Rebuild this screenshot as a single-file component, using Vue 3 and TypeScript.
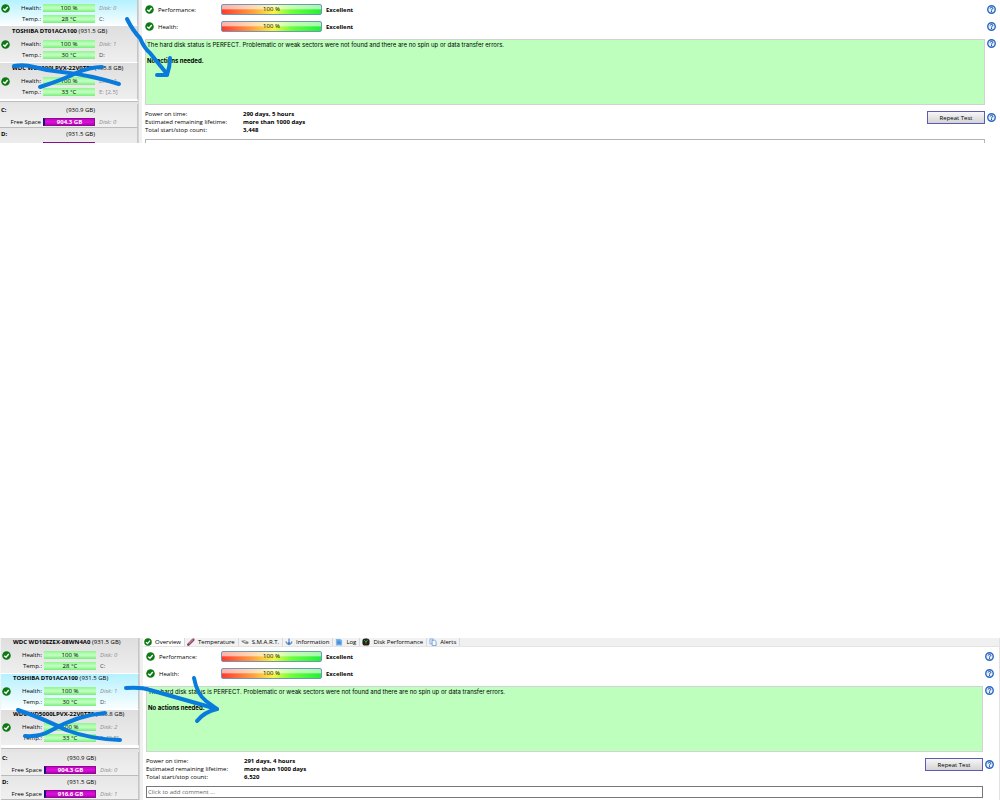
<script setup lang="ts">
interface Disk {
  model: string
  size: string
  temp: string
  disk: string
  letter: string
  selected?: boolean
}
interface Volume {
  name: string
  size: string
  free: string
  disk: string
}
interface Report {
  id: string
  tabs: boolean
  disks: Disk[]
  powerOn: string
  startStop: string
  strokes: string[]
}

const volumes: Volume[] = [
  { name: 'C:', size: '(930.9 GB)', free: '904.3 GB', disk: 'Disk: 0' },
  { name: 'D:', size: '(931.5 GB)', free: '916.6 GB', disk: 'Disk: 1' },
]

const tabs = [
  { label: 'Overview', icon: 'ok' },
  { label: 'Temperature', icon: 'temp' },
  { label: 'S.M.A.R.T.', icon: 'smart' },
  { label: 'Information', icon: 'info' },
  { label: 'Log', icon: 'log' },
  { label: 'Disk Performance', icon: 'perf' },
  { label: 'Alerts', icon: 'alert' },
]

const reports: Report[] = [
  {
    id: 'first',
    tabs: false,
    disks: [
      { model: '', size: '', temp: '28 °C', disk: 'Disk: 0', letter: 'C:', selected: true },
      { model: 'TOSHIBA DT01ACA100', size: '(931.5 GB)', temp: '30 °C', disk: 'Disk: 1', letter: 'D:' },
      { model: 'WDC WD5000LPVX-22V0TT0', size: '(465.8 GB)', temp: '33 °C', disk: 'Disk: 2', letter: 'E: [2.5]' },
    ],
    powerOn: '290 days, 5 hours',
    startStop: '3,448',
    strokes: [
      'M127 19Q133 31 140 38Q144 48 150 53L167 74',
      'M170 58Q170 66 167 75L157 75',
      'M14 66Q24 64 34 67Q48 71 62 72Q90 75 119 84',
      'M40 87Q65 79 76 73Q90 67 102 67',
    ],
  },
  {
    id: 'second',
    tabs: true,
    disks: [
      { model: 'WDC WD10EZEX-08WN4A0', size: '(931.5 GB)', temp: '28 °C', disk: 'Disk: 0', letter: 'C:' },
      { model: 'TOSHIBA DT01ACA100', size: '(931.5 GB)', temp: '30 °C', disk: 'Disk: 1', letter: 'D:', selected: true },
      { model: 'WDC WD5000LPVX-22V0TT0', size: '(465.8 GB)', temp: '33 °C', disk: 'Disk: 2', letter: 'E: [2.5]' },
    ],
    powerOn: '291 days, 4 hours',
    startStop: '6,520',
    strokes: [
      'M126 50Q142 49 150 52L217 71',
      'M194 40Q197 56 206 63L217 71Q204 74 197 83',
      'M18 72Q42 80 66 92Q90 101 120 102',
      'M25 98Q40 99 50 93Q78 77 105 75',
    ],
  },
]
</script>

<template>
  <div class="page">
    <section v-for="r in reports" :key="r.id" class="report" :class="r.id">
      <aside class="side">
        <div class="disks">
          <div v-for="d in r.disks" :key="d.disk" class="disk" :class="{ selected: d.selected, partial: !d.model }">
            <div v-if="d.model" class="title"><b>{{ d.model }}</b> {{ d.size }}</div>
            <div class="stats">
              <svg class="ok" viewBox="0 0 18 18"><circle cx="9" cy="9" r="8.5" fill="#0b7a12" /><path d="M4.500 9.500L8 12.500L13.500 6" fill="none" stroke="#fff" stroke-width="2.800" /></svg>
              <span class="name">Health:</span><span class="bar">100 %</span><i>{{ d.disk }}</i>
              <span class="name">Temp.:</span><span class="bar">{{ d.temp }}</span><span class="letter" :class="{ muted: d.letter.length > 2 }">{{ d.letter }}</span>
            </div>
          </div>
        </div>
        <div class="volumes">
          <div v-for="v in volumes" :key="v.name" class="volume">
            <b>{{ v.name }}</b><span class="capacity">{{ v.size }}</span><span></span>
            <span class="name">Free Space</span><span class="free">{{ v.free }}</span><i>{{ v.disk }}</i>
          </div>
        </div>
      </aside>

      <main class="main">
        <nav v-if="r.tabs" class="tabs">
          <button v-for="t in tabs" :key="t.label" type="button" class="tab" :class="{ active: t.icon === 'ok' }">
            <svg viewBox="0 0 18 18">
              <template v-if="t.icon === 'ok'"><circle cx="9" cy="9" r="8.500" fill="#0b7a12" /><path d="M4.500 9.500L8 12.500L13.500 6" fill="none" stroke="#fff" stroke-width="2.800" /></template>
              <template v-else-if="t.icon === 'temp'"><path d="M3 15L14 4" stroke="#8d4360" stroke-width="6" stroke-linecap="round" /><path d="M4 13L14 3" stroke="#e7a9bd" stroke-width="2" /></template>
              <template v-else-if="t.icon === 'smart'"><path d="M1 6L8 5L17 9L16 13L10 13L2 9Z" fill="#777" /><path d="M3 6L9 6L14 9L9 10Z" fill="#ddd" /></template>
              <template v-else-if="t.icon === 'info'"><path d="M9 1V12M2 8Q4 14 9 15Q14 14 16 8" fill="none" stroke="#5d8fd0" stroke-width="3" /><path d="M6 10H12L9 15Z" fill="#2f62ac" /></template>
              <template v-else-if="t.icon === 'log'"><path d="M2 2H12L16 5V17H2Z" fill="#78b6ee" /><path d="M5 7H12M5 10H13M5 13H13" stroke="#2a6dbd" stroke-width="1.500" /></template>
              <template v-else-if="t.icon === 'perf'"><rect x="1" y="1" width="16" height="16" rx="6" fill="#17251a" /><path d="M5 5L9 9L13 4" fill="none" stroke="#3bbf46" stroke-width="2" /><circle cx="9" cy="11" r="2" fill="#b03030" /></template>
              <template v-else><path d="M2 2H9V13H2Z" fill="#dcecff" stroke="#6a9ad8" stroke-width="1.500" /><path d="M7 5H13L16 8V17H7Z" fill="#f5faff" stroke="#4a7fc8" stroke-width="1.500" /></template>
            </svg>{{ t.label }}
          </button>
        </nav>
        <div class="body">
          <div v-for="m in ['Performance:', 'Health:']" :key="m" class="metric">
            <svg class="ok" viewBox="0 0 18 18"><circle cx="9" cy="9" r="8.500" fill="#0b7a12" /><path d="M4.500 9.500L8 12.500L13.500 6" fill="none" stroke="#fff" stroke-width="2.800" /></svg>
            <span class="metric-name">{{ m }}</span>
            <span class="gauge">100 %</span>
            <b>Excellent</b>
            <button type="button" class="help" aria-label="Help"><svg viewBox="0 0 18 18"><circle cx="9" cy="9" r="7.500" fill="#e2f1ff" stroke="#2a68c4" stroke-width="2.800" /><path d="M6.300 7Q6.500 4.800 9 4.800Q11.700 4.900 11.600 7Q11.400 8.500 9 9.600V11M9 12.200V14" fill="none" stroke="#233f9c" stroke-width="2" /></svg></button>
          </div>
          <div class="status-row">
            <div class="status">
              <p>The hard disk status is PERFECT. Problematic or weak sectors were not found and there are no spin up or data transfer errors.</p>
              <p><b>No actions needed.</b></p>
            </div>
            <button type="button" class="help" aria-label="Help"><svg viewBox="0 0 18 18"><circle cx="9" cy="9" r="7.500" fill="#e2f1ff" stroke="#2a68c4" stroke-width="2.800" /><path d="M6.300 7Q6.500 4.800 9 4.800Q11.700 4.900 11.600 7Q11.400 8.500 9 9.600V11M9 12.200V14" fill="none" stroke="#233f9c" stroke-width="2" /></svg></button>
          </div>
          <div class="summary">
            <dl>
              <dt>Power on time:</dt><dd>{{ r.powerOn }}</dd>
              <dt>Estimated remaining lifetime:</dt><dd>more than 1000 days</dd>
              <dt>Total start/stop count:</dt><dd>{{ r.startStop }}</dd>
            </dl>
            <button type="button" class="repeat">Repeat Test</button>
            <button type="button" class="help" aria-label="Help"><svg viewBox="0 0 18 18"><circle cx="9" cy="9" r="7.500" fill="#e2f1ff" stroke="#2a68c4" stroke-width="2.800" /><path d="M6.300 7Q6.500 4.800 9 4.800Q11.700 4.900 11.600 7Q11.400 8.500 9 9.600V11M9 12.200V14" fill="none" stroke="#233f9c" stroke-width="2" /></svg></button>
          </div>
          <input class="comment" type="text" aria-label="Comment" placeholder="Click to add comment ..." />
        </div>
      </main>

      <svg class="ink" width="250" height="162" viewBox="0 0 250 162">
        <path v-for="s in r.strokes" :key="s" :d="s" />
      </svg>
    </section>
  </div>
</template>

<style>
body {
  margin: 0;
  background: #fff;
}
</style>

<style scoped>
.page {
  min-height: 100vh;
  display: flex;
  flex-direction: column;
  justify-content: space-between;
  font: 6px/8px "Open Sans", "Noto Sans", sans-serif;
  color: #000;
}
.page * {
  box-sizing: border-box;
}
.report {
  position: relative;
  display: flex;
  overflow: hidden;
  white-space: nowrap;
}
.first {
  max-height: 143px;
}
.second {
  max-height: 162px;
}
button,
input {
  font: inherit;
  color: inherit;
  padding: 0;
  margin: 0;
}
.side {
  flex: none;
  width: 139px;
  background: #f4f4f4;
  border-right: 1px solid #d4d4d4;
}
.second .side {
  width: 140px;
  padding-left: 1px;
}
.disks {
  border-bottom: 1px solid #bdbdbd;
  padding-bottom: 1px;
  background: #fff;
}
.second .disks {
  padding-bottom: 2px;
}
.disk {
  height: 37px;
  padding-top: 1px;
  background: linear-gradient(#dedede, #efefef);
  border-bottom: 1px solid #fff;
  border-right: 1px solid #c6c6c6;
}
.second .disk {
  height: 36px;
  padding-top: 0;
}
.disk.partial {
  height: 26px;
  padding-top: 2px;
}
.disk.selected {
  background: linear-gradient(#b4f1ff, #fafeff);
}
.title {
  padding-left: 12px;
  line-height: 8px;
  margin-bottom: 3px;
}
.stats {
  display: grid;
  grid-template-columns: 9px 30px 52px 1fr;
  grid-auto-rows: 11px;
  column-gap: 2px;
  align-items: center;
}
.ok {
  width: 9px;
  height: 9px;
  flex: none;
}
.stats .ok {
  grid-row: 1 / span 2;
  margin: 0 0 9px 1px;
}
.name {
  text-align: right;
}
.bar {
  height: 8px;
  line-height: 8px;
  text-align: center;
  background: linear-gradient(#8df88d, #c4ffc4 50%, #79ee79);
}
.side i {
  color: #8f8f8f;
  padding-left: 2px;
}
.letter {
  padding-left: 2px;
  color: #444;
}
.letter.muted {
  color: #8f8f8f;
}
.volumes {
  border-top: 2px solid #e4e4e4;
}
.second .volumes {
  border-top-width: 3px;
}
.volume {
  display: grid;
  grid-template-columns: 41px 52px 1fr;
  grid-template-rows: 12px 11px;
  column-gap: 2px;
  align-items: center;
  height: 24px;
  background: linear-gradient(#e6e6e6, #f0f0f0);
  border-bottom: 1px solid #bbb;
  border-right: 1px solid #c6c6c6;
}
.volume > b {
  padding-left: 1px;
}
.capacity {
  text-align: right;
}
.free {
  height: 8px;
  line-height: 6px;
  color: #fff;
  font-weight: bold;
  text-align: center;
  background: linear-gradient(#c800c8, #e010e0 50%, #b400b4);
  border: 1px solid #8a108a;
  border-left: 2px solid #10107a;
}
.main {
  flex: 1;
  min-width: 0;
  border-left: 3px solid #f0f0f0;
}
.second .main {
  border-right: 1px solid #e2e2e2;
}
.tabs {
  display: flex;
  height: 9px;
  background: #f0f0f0;
  border-bottom: 1px solid #e4e4e4;
}
.tab {
  display: flex;
  align-items: center;
  gap: 3px;
  height: 8px;
  padding: 0 3px 1px 2px;
  border: 0;
  border-right: 1px solid #d9d9d9;
  background: #f2f2f2;
}
.tab.active {
  background: #fff;
  padding-left: 1px;
}
.tab svg {
  width: 8px;
  height: 8px;
}
.body {
  padding: 1px 4px 0 3px;
}
.second .body {
  padding: 1px 5px 2px 3px;
}
.metric {
  display: flex;
  align-items: center;
  height: 17px;
}
.metric-name {
  width: 63px;
  margin-left: 4px;
}
.second .metric-name {
  width: 62px;
}
.gauge {
  width: 101px;
  height: 11px;
  line-height: 7px;
  padding: 1px;
  margin-right: 4px;
  text-align: center;
  border: 1px solid #7295ba;
  border-radius: 2px;
  background:
    linear-gradient(rgba(255, 255, 255, 0.6) 40%, transparent 55%),
    linear-gradient(90deg, #ff3b30, #ff9c40 30%, #f5f542 52%, #6cff3c 70%, #22f03a);
}
.help {
  width: 9px;
  height: 9px;
  border: 0;
  background: none;
  margin-left: auto;
  flex: none;
}
.help svg {
  display: block;
  width: 9px;
  height: 9px;
}
.status-row {
  display: flex;
  gap: 2px;
  margin-top: 4px;
}
.status {
  flex: 1;
  height: 66px;
  padding: 1px;
  background: #beffbe;
  border: 1px solid #d2d2d2;
  font: 6px/8px Inter, "Liberation Sans", sans-serif;
}
.status p {
  margin: 0 0 8px;
}
.summary {
  display: flex;
  align-items: flex-start;
  margin-top: 5px;
}
.summary dl {
  display: grid;
  grid-template-columns: 98px auto;
  grid-auto-rows: 8px;
  margin: 0;
}
.summary dd {
  margin: 0;
  font-weight: bold;
}
.repeat {
  width: 58px;
  height: 13px;
  margin: 1px 2px 0 auto;
  border: 1px solid #5b5bb5;
  background: linear-gradient(#f6f6f6, #d4d4d4);
}
.summary .help {
  margin: 3px 0 0;
}
.comment {
  display: block;
  width: calc(100% - 11px);
  height: 12px;
  margin-top: 5px;
  padding: 0 1px;
  border: 1px solid #777;
  background: #fff;
}
.first .comment {
  border-color: #b4b4b4;
}
.comment::placeholder {
  color: #666;
}
.ink {
  position: absolute;
  left: 0;
  top: 0;
  fill: none;
  stroke: #087bdc;
  stroke-width: 4;
  stroke-linecap: round;
  stroke-linejoin: round;
}
</style>
